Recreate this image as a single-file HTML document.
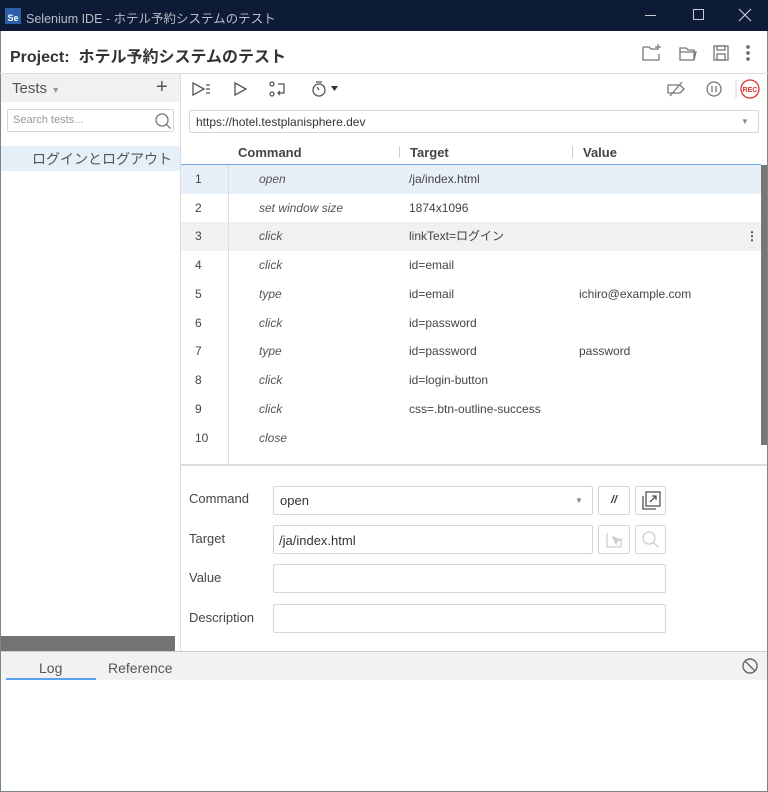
<!DOCTYPE html>
<html><head><meta charset="utf-8"><style>
*{box-sizing:border-box;margin:0;padding:0}
body{width:768px;height:792px;overflow:hidden;background:#fff;font-family:"Liberation Sans","Noto Sans CJK JP",sans-serif;color:#333;position:relative;font-size:13px}
.a{position:absolute}
.title{left:0;top:0;width:768px;height:31px;background:#0d1b37;color:#b9bdc6;font-size:12.5px}
.bd{border:1px solid #d6d6d6;background:#fff;border-radius:2px}
.row{position:absolute;left:181px;width:580px;height:29px;font-size:12px;color:#444}
.row span{position:absolute;top:7px;line-height:14px;height:14px}
.row .n{left:14px}.row .c{left:78px;font-style:italic;color:#555}.row .t{left:228px}.row .v{left:398px}
.lbl{font-size:13px;color:#444}
</style></head><body>
<div class="a" style="left:0;top:0;width:1px;height:792px;background:#7a8a78"></div>
<div class="a" style="left:767px;top:0;width:1px;height:792px;background:#7a8a78"></div>
<div class="a" style="left:0;top:791px;width:768px;height:1px;background:#7a8a78"></div>
<div class="a title">
 <div class="a" style="left:5px;top:8px;width:16px;height:16px;background:#2d5fa8;color:#fff;font-size:9px;font-weight:bold;line-height:20px;text-align:center">Se</div>
 <div class="a" style="left:26px;top:8px">Selenium IDE - ホテル予約システムのテスト</div>
 <div class="a" style="left:645px;top:15px;width:11px;height:1px;background:#c9ccd3"></div>
 <div class="a" style="left:693px;top:9px;width:11px;height:11px;border:1px solid #c9ccd3"></div>
 <svg class="a" style="left:738px;top:8px" width="14" height="14" stroke="#c9ccd3" stroke-width="1.2"><path d="M1 1l12 12M13 1L1 13"/></svg>
</div>
<div class="a" style="left:10px;top:43px;font-size:16px;font-weight:bold;color:#333">Project:&nbsp; ホテル予約システムのテスト</div>
<svg class="a" style="left:640px;top:42px" width="120" height="22" fill="none" stroke="#777" stroke-width="1.3">
 <path d="M3 5h6l2 2h7M3 5v13h16v-6"/><path d="M18 2v6M15 5h6" stroke-width="1.2"/>
 <path d="M40 6h6l2 2h6v10H40zM40 10h16l-2 8"/>
 <rect x="74" y="4" width="14" height="14"/><rect x="77" y="4" width="8" height="4"/><rect x="77" y="12" width="8" height="6"/>
 <circle cx="108" cy="5" r="1.2" fill="#333"/><circle cx="108" cy="11" r="1.2" fill="#333"/><circle cx="108" cy="17" r="1.2" fill="#333"/>
</svg>
<div class="a" style="left:0;top:73px;width:768px;height:1px;background:#ddd"></div>
<div class="a" style="left:1px;top:74px;width:179px;height:28px;background:#f1f1f1"></div>
<div class="a" style="left:12px;top:80px;font-size:15px;color:#555">Tests <span style="font-size:9px;color:#999">▼</span></div>
<div class="a" style="left:156px;top:76px;font-size:20px;color:#555">+</div>
<div class="a bd" style="left:7px;top:109px;width:167px;height:23px"></div>
<div class="a" style="left:13px;top:114px;font-size:11px;color:#999">Search tests...</div>
<svg class="a" style="left:154px;top:112px" width="18" height="18" fill="none" stroke="#777" stroke-width="1.3"><circle cx="8" cy="8" r="6"/><path d="M12.5 12.5l4 4"/></svg>
<div class="a" style="left:1px;top:146px;width:179px;height:25px;background:#e6eef7"></div>
<div class="a" style="left:32px;top:149px;font-size:14px;color:#555">ログインとログアウト</div>
<div class="a" style="left:1px;top:636px;width:174px;height:15px;background:#737373"></div>
<div class="a" style="left:180px;top:74px;width:1px;height:578px;background:#ddd"></div>
<svg class="a" style="left:190px;top:80px" width="160" height="18" fill="none" stroke="#555" stroke-width="1.3">
 <path d="M3 3l11 6-11 6z"/><path d="M16 5h4M16 9h4M16 13h4"/>
 <path d="M45 3l11 6-11 6z"/>
 <circle cx="82" cy="4" r="2"/><circle cx="82" cy="14" r="2"/><path d="M88 4h6v9h-6M90 11l-2 2 2 2"/>
 <circle cx="129" cy="10" r="6"/><path d="M129 10l-2-3M126 2h6"/><path d="M141 6h7l-3.5 5z" fill="#333" stroke="none"/>
</svg>
<svg class="a" style="left:664px;top:78px" width="100" height="22" fill="none" stroke="#777" stroke-width="1.3">
 <path d="M4 7h12l4 4-4 4H4zM6 18L18 4"/>
 <circle cx="50" cy="11" r="7"/><path d="M48 8v6M52 8v6"/>
 <path d="M72 2v18" stroke="#ddd"/>
 <circle cx="86" cy="11" r="9" stroke="#d33"/><text x="86" y="14" font-size="7" fill="#d33" stroke="none" text-anchor="middle" font-family="Liberation Sans" font-weight="bold">REC</text>
</svg>
<div class="a bd" style="left:189px;top:110px;width:570px;height:23px"></div>
<div class="a" style="left:196px;top:115px;font-size:12px;color:#333">https://hotel.testplanisphere.dev</div>
<div class="a" style="left:741px;top:117px;font-size:8px;color:#888">▼</div>
<div class="a" style="left:238px;top:145px;font-weight:bold;color:#444">Command</div>
<div class="a" style="left:399px;top:146px;width:1px;height:12px;background:#ccc"></div>
<div class="a" style="left:410px;top:145px;font-weight:bold;color:#444">Target</div>
<div class="a" style="left:572px;top:146px;width:1px;height:12px;background:#ccc"></div>
<div class="a" style="left:583px;top:145px;font-weight:bold;color:#444">Value</div>
<div class="a" style="left:181px;top:164px;width:580px;height:1px;background:#6ea5e6"></div>
<div class="row" style="top:165px;background:#e7eff8"><span class="n">1</span><span class="c">open</span><span class="t">/ja/index.html</span></div>
<div class="row" style="top:194px"><span class="n">2</span><span class="c">set window size</span><span class="t">1874x1096</span></div>
<div class="row" style="top:222px;background:#f1f1f1"><span class="n">3</span><span class="c">click</span><span class="t">linkText=ログイン</span><span style="left:565px;top:7px;font-weight:bold">⋮</span></div>
<div class="row" style="top:251px"><span class="n">4</span><span class="c">click</span><span class="t">id=email</span></div>
<div class="row" style="top:280px"><span class="n">5</span><span class="c">type</span><span class="t">id=email</span><span class="v">ichiro@example.com</span></div>
<div class="row" style="top:309px"><span class="n">6</span><span class="c">click</span><span class="t">id=password</span></div>
<div class="row" style="top:337px"><span class="n">7</span><span class="c">type</span><span class="t">id=password</span><span class="v">password</span></div>
<div class="row" style="top:366px"><span class="n">8</span><span class="c">click</span><span class="t">id=login-button</span></div>
<div class="row" style="top:395px"><span class="n">9</span><span class="c">click</span><span class="t">css=.btn-outline-success</span></div>
<div class="row" style="top:424px"><span class="n">10</span><span class="c">close</span></div>
<div class="a" style="left:228px;top:165px;width:1px;height:299px;background:#ddd"></div>
<div class="a" style="left:761px;top:165px;width:6px;height:280px;background:#777"></div>
<div class="a" style="left:181px;top:464px;width:586px;height:2px;background:#ddd"></div>
<div class="a lbl" style="left:189px;top:491px">Command</div>
<div class="a lbl" style="left:189px;top:531px">Target</div>
<div class="a lbl" style="left:189px;top:570px">Value</div>
<div class="a lbl" style="left:189px;top:610px">Description</div>
<div class="a bd" style="left:273px;top:486px;width:320px;height:29px"></div>
<div class="a" style="left:280px;top:493px;color:#333">open</div>
<div class="a" style="left:575px;top:496px;font-size:8px;color:#888">▼</div>
<div class="a bd" style="left:598px;top:486px;width:32px;height:29px;text-align:center;line-height:27px;font-style:italic;font-weight:bold;font-size:11px">//</div>
<div class="a bd" style="left:635px;top:486px;width:31px;height:29px"></div>
<svg class="a" style="left:640px;top:490px" width="22" height="22" fill="none" stroke="#555" stroke-width="1.3"><rect x="6" y="2" width="14" height="14"/><path d="M3 6v13h13M10 12l6-6M12 6h4v4"/></svg>
<div class="a bd" style="left:273px;top:525px;width:320px;height:29px"></div>
<div class="a" style="left:279px;top:533px;color:#333">/ja/index.html</div>
<div class="a bd" style="left:598px;top:525px;width:32px;height:29px"></div>
<svg class="a" style="left:604px;top:530px" width="20" height="20" fill="none" stroke="#ccc" stroke-width="1.2"><path d="M3 3v14h14V8"/><path d="M9 7l7 3-3 1-1 3z" fill="#ccc"/></svg>
<div class="a bd" style="left:635px;top:525px;width:31px;height:29px"></div>
<svg class="a" style="left:640px;top:529px" width="22" height="22" fill="none" stroke="#ccc" stroke-width="1.3"><circle cx="9" cy="9" r="6"/><path d="M13.5 13.5l5 5"/></svg>
<div class="a bd" style="left:273px;top:564px;width:393px;height:29px"></div>
<div class="a bd" style="left:273px;top:604px;width:393px;height:29px"></div>
<div class="a" style="left:1px;top:651px;width:766px;height:1px;background:#ccc"></div>
<div class="a" style="left:1px;top:652px;width:766px;height:28px;background:#f2f2f2"></div>
<div class="a" style="left:39px;top:660px;font-size:14px;color:#555">Log</div>
<div class="a" style="left:108px;top:660px;font-size:14px;color:#555">Reference</div>
<div class="a" style="left:6px;top:678px;width:90px;height:2px;background:#5aa3f0"></div>
<svg class="a" style="left:741px;top:657px" width="18" height="18" fill="none" stroke="#666" stroke-width="1.4"><circle cx="9" cy="9" r="7"/><path d="M4 4l10 10"/></svg>
</body></html>
